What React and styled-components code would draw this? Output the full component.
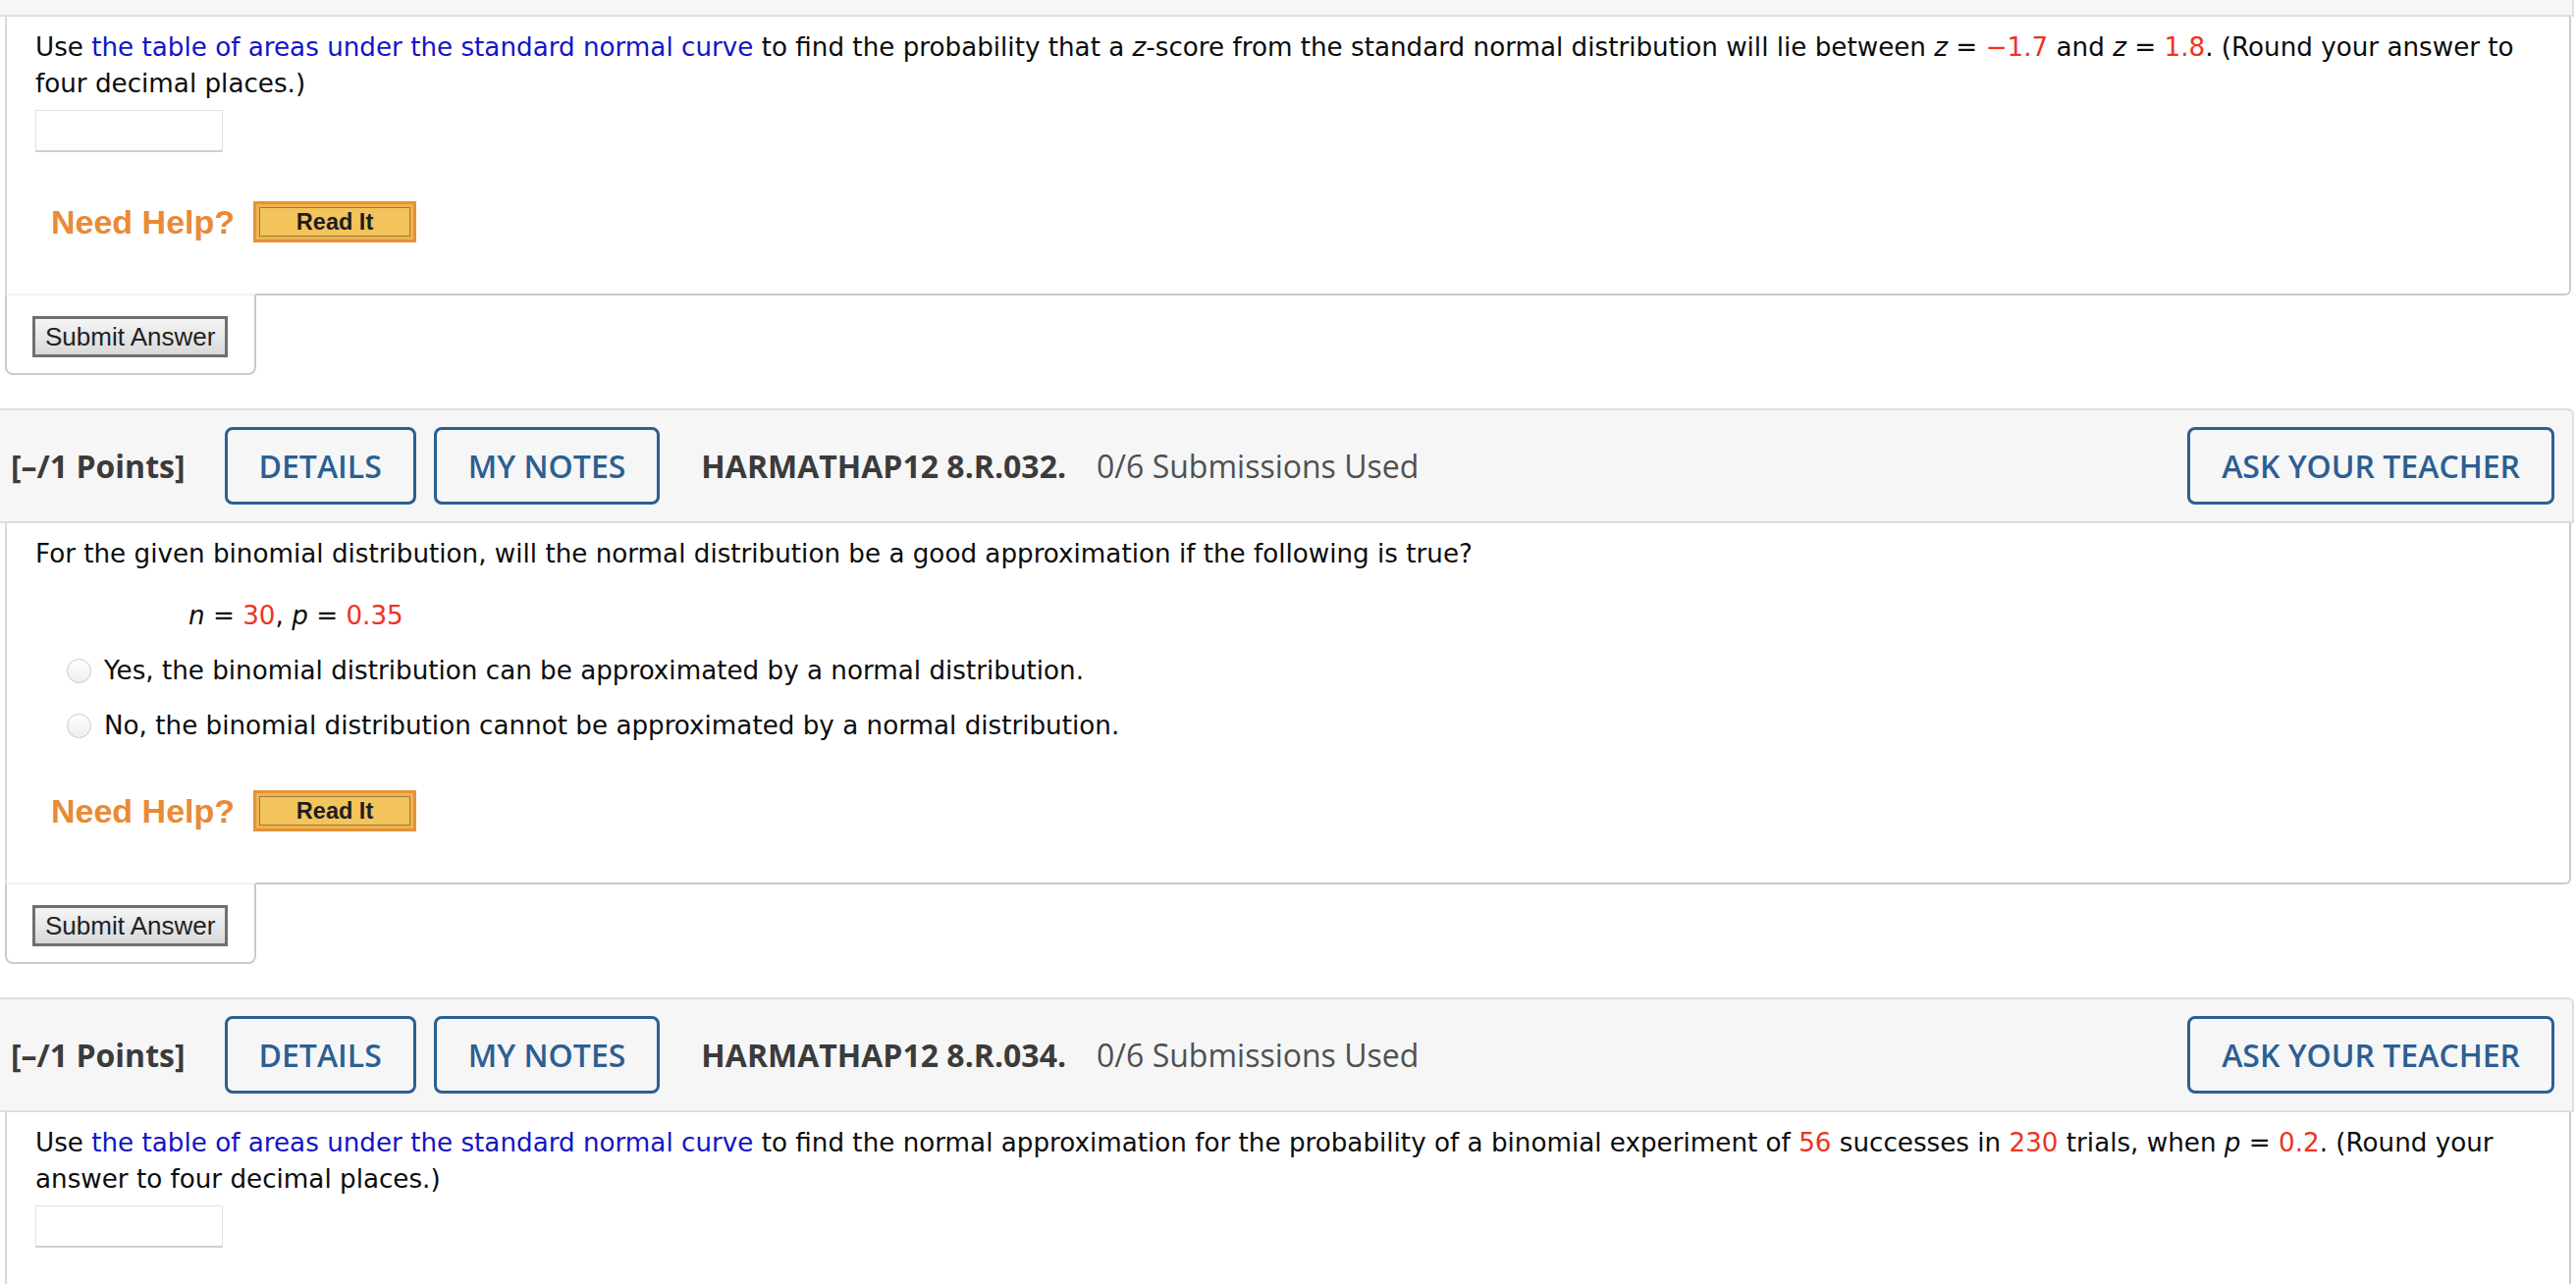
import React from "react"
import styled, { createGlobalStyle } from "styled-components"

const GlobalStyle = createGlobalStyle`
  html, body { margin: 0; padding: 0; background: #fff; }
  body { font-family: "DejaVu Sans", Verdana, sans-serif; color: #0c0c0c; }
`

// the page is scrolled: the first question's header sits mostly above the fold
const Viewport = styled.div`
  width: 2624px;
  height: 1308px;
  overflow: hidden;
`

const Scroller = styled.div`
  margin-top: -100px;
  width: 2622px;
  display: flex;
  flex-direction: column;
  gap: 34px;
`

const Question = styled.section`
  display: flex;
  flex-direction: column;
`

const Header = styled.header`
  height: 113px;
  display: flex;
  align-items: center;
  padding: 0 18px 0 11px;
  background: #f6f6f6;
  border: 2px solid #dedede;
  border-left: none;
  border-radius: 0 6px 0 0;
  font-family: "Open Sans", sans-serif;
  font-size: 32px;
`

const Points = styled.span`
  font-weight: 700;
  color: #3b3b3b;
  margin-right: 40px;
`

const HeaderButton = styled.button`
  height: 79px;
  padding: 0 32px;
  border: 3px solid #2b5f93;
  border-radius: 8px;
  background: transparent;
  color: #2b5f93;
  font-family: "Open Sans", sans-serif;
  font-weight: 600;
  font-size: 32px;
  margin-right: ${p => p.$gap || 0}px;
  margin-left: ${p => (p.$right ? "auto" : "0")};
`

const QuestionId = styled.span`
  font-weight: 700;
  color: #3b3b3b;
  margin-left: 42px;
`

const Submissions = styled.span`
  color: #505050;
  margin-left: 31px;
`

const Body = styled.div`
  margin: 0 3px 0 5px;
  padding: 13px 29px 52px;
  border: 2px solid #dadada;
  border-top: none;
  border-bottom-color: #cbcbcb;
  border-right-color: #cbcbcb;
  border-radius: 0 0 6px 0;
  background: #fff;
  font-size: 26.2px;
  line-height: 37px;
`

const Prompt = styled.div``

const Link = styled.span`
  color: #1414c6;
`

const Red = styled.span`
  color: #ee3322;
`

const Formula = styled.div`
  margin-top: 26px;
  padding-left: 156px;
`

const Option = styled.label`
  display: flex;
  align-items: center;
  gap: 13px;
  margin-top: 19px;
  padding-left: 32px;
`

const Radio = styled.span`
  width: 23px;
  height: 23px;
  border-radius: 50%;
  border: 1px solid #c9c9c9;
  background: linear-gradient(#ffffff, #eeeeee);
`

const AnswerBox = styled.div`
  margin-top: 8px;
  width: 191px;
  height: 43px;
  box-sizing: border-box;
  border: 1px solid #e2e2e2;
  border-bottom: 2px solid #cfcfcf;
  background: #fff;
`

const HelpRow = styled.div`
  display: flex;
  align-items: center;
  gap: 19px;
  margin-top: ${p => p.$top}px;
  padding-left: 16px;
`

const NeedHelp = styled.span`
  font-family: "Liberation Sans", Arial, sans-serif;
  font-weight: 700;
  font-size: 34px;
  line-height: 42px;
  color: #e98a35;
`

const ReadIt = styled.button`
  width: 166px;
  height: 42px;
  padding: 0;
  border: 3px solid #e5933a;
  background: #f3c35c;
  box-shadow: inset 0 0 0 3px #f1b44e, inset 0 0 0 4px #9b7a3c;
  font-family: "Liberation Sans", Arial, sans-serif;
  font-weight: 700;
  font-size: 23.5px;
  color: #1e1e1e;
`

const Tab = styled.div`
  align-self: flex-start;
  margin: -2px 0 0 5px;
  width: 256px;
  box-sizing: border-box;
  padding: 21px 0 16px 26px;
  border: 2px solid #cbcbcb;
  border-top-color: #f3f3f3;
  border-radius: 0 0 8px 8px;
  background: #fff;
`

const SubmitButton = styled.button`
  height: 42px;
  padding: 0 10px;
  border: 3px solid #6f6f6f;
  background: linear-gradient(#f5f5f5, #d9d9d9);
  font-family: "Liberation Sans", Arial, sans-serif;
  font-size: 26px;
  color: #222;
`

function QuestionHeader({ id }) {
  return (
    <Header>
      <Points>[–/1 Points]</Points>
      <HeaderButton $gap={18}>DETAILS</HeaderButton>
      <HeaderButton>MY NOTES</HeaderButton>
      <QuestionId>{id}</QuestionId>
      <Submissions>0/6 Submissions Used</Submissions>
      <HeaderButton $right>ASK YOUR TEACHER</HeaderButton>
    </Header>
  )
}

function Help({ top }) {
  return (
    <HelpRow $top={top}>
      <NeedHelp>Need Help?</NeedHelp>
      <ReadIt>Read It</ReadIt>
    </HelpRow>
  )
}

function Submit() {
  return (
    <Tab>
      <SubmitButton>Submit Answer</SubmitButton>
    </Tab>
  )
}

export default function App() {
  return (
    <Viewport>
      <GlobalStyle />
      <Scroller>
        <Question>
          <QuestionHeader id="HARMATHAP12 8.R.030." />
          <Body>
            <Prompt>
              Use <Link>the table of areas under the standard normal curve</Link> to find the probability
              that a <i>z</i>-score from the standard normal distribution will lie between <i>z</i> ={" "}
              <Red>−1.7</Red> and <i>z</i> = <Red>1.8</Red>. (Round your answer to four decimal places.)
            </Prompt>
            <AnswerBox />
            <Help top={50} />
          </Body>
          <Submit />
        </Question>

        <Question>
          <QuestionHeader id="HARMATHAP12 8.R.032." />
          <Body>
            <Prompt>
              For the given binomial distribution, will the normal distribution be a good approximation if the
              following is true?
            </Prompt>
            <Formula>
              <i>n</i> = <Red>30</Red>, <i>p</i> = <Red>0.35</Red>
            </Formula>
            <Option>
              <Radio />
              Yes, the binomial distribution can be approximated by a normal distribution.
            </Option>
            <Option>
              <Radio />
              No, the binomial distribution cannot be approximated by a normal distribution.
            </Option>
            <Help top={47} />
          </Body>
          <Submit />
        </Question>

        <Question>
          <QuestionHeader id="HARMATHAP12 8.R.034." />
          <Body>
            <Prompt>
              Use <Link>the table of areas under the standard normal curve</Link> to find the normal
              approximation for the probability of a binomial experiment of <Red>56</Red> successes in{" "}
              <Red>230</Red> trials, when <i>p</i> = <Red>0.2</Red>. (Round your answer to four decimal
              places.)
            </Prompt>
            <AnswerBox />
            <Help top={50} />
          </Body>
          <Submit />
        </Question>
      </Scroller>
    </Viewport>
  )
}
